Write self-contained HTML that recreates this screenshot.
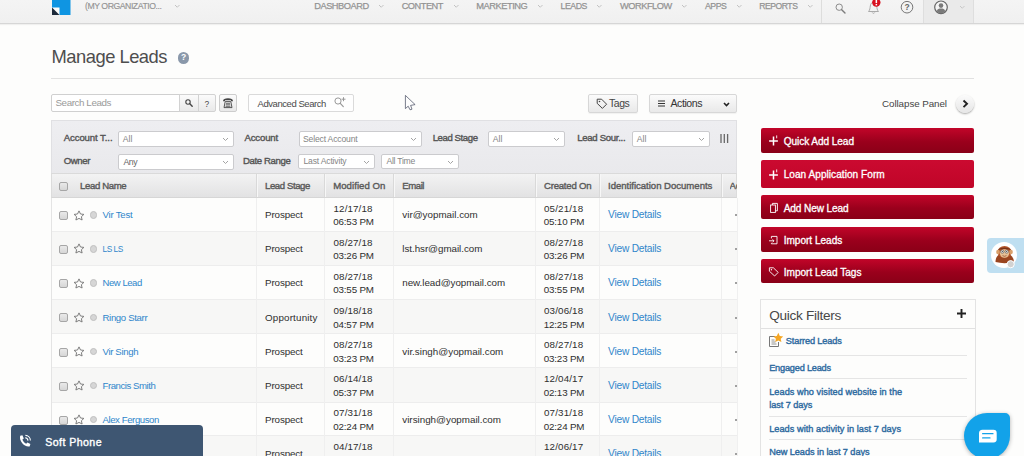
<!DOCTYPE html>
<html>
<head>
<meta charset="utf-8">
<title>Manage Leads</title>
<style>
*{box-sizing:border-box;margin:0;padding:0}
html,body{width:1024px;height:456px;overflow:hidden;background:#fdfdfc;font-family:"Liberation Sans",sans-serif;color:#333}
body{position:relative}
.abs{position:absolute}
.t{white-space:nowrap;position:absolute}
#hdr{left:0;top:0;width:1024px;height:24px;background:linear-gradient(#f4f4f4,#f0f0f0);border-bottom:1px solid #d6d6d6;box-shadow:0 1px 1px rgba(0,0,0,.05)}
.sel{background:#fff;border:1px solid #cbcbce;border-radius:2px;position:absolute}
.row{left:52px;width:685px;position:absolute;border-bottom:1px solid #ededed}
.row.alt{background:#f7f7f6}
.btn{position:absolute;left:761px;width:213px;border-radius:2px;background:linear-gradient(#c20529,#9a001c 55%,#8a0017)}
.qs{position:absolute;left:769px;width:198px;height:1px;background:#e5e5e5}
.cb{position:absolute;width:9px;height:9px;border:1px solid #a6a6a6;border-radius:2px;background:linear-gradient(#e9e9e9,#d6d6d6)}
.vs{position:absolute;width:1px;background:#e6e6e6}
</style>
</head>
<body>

<div id="hdr" class="abs"></div>
<div class="abs" style="left:923px;top:0;width:51px;height:23px;background:#eaeaea;border-left:1px solid #dedede;border-right:1px solid #dedede"></div>
<div class="abs" style="left:821px;top:0;width:1px;height:23px;background:#dddddc"></div>
<svg class="abs" style="left:52px;top:0" width="19" height="16" viewBox="0 0 19 16"><rect x="0" y="0" width="18.5" height="15" fill="#0f95e2"/><rect x="0" y="7.5" width="7.5" height="7.5" fill="#fdfdfc"/><polygon points="0,7.5 7.5,15 0,15" fill="#1d2a3a"/></svg>
<div class="t" style="left:85.00px;top:0px;font-size:8.68px;line-height:12px;letter-spacing:-0.450px;color:#939393;-webkit-text-stroke:0.15px #939393;">(MY ORGANIZATIO...</div>
<svg class="abs" style="left:173.8px;top:4.1px" width="6.5" height="4.25" viewBox="0 0 6.5 4.25"><path d="M1 1 L3.25 3.25 L5.5 1" fill="none" stroke="#c2c2c2" stroke-width="1"/></svg>
<div class="t" style="left:314.20px;top:0px;font-size:9.26px;line-height:12px;letter-spacing:-0.450px;color:#939393;-webkit-text-stroke:0.25px #939393;">DASHBOARD</div>
<svg class="abs" style="left:377.8px;top:4.1px" width="6.5" height="4.25" viewBox="0 0 6.5 4.25"><path d="M1 1 L3.25 3.25 L5.5 1" fill="none" stroke="#c2c2c2" stroke-width="1"/></svg>
<div class="t" style="left:401.70px;top:0px;font-size:9.20px;line-height:12px;letter-spacing:-0.450px;color:#939393;-webkit-text-stroke:0.25px #939393;">CONTENT</div>
<svg class="abs" style="left:452.8px;top:4.1px" width="6.5" height="4.25" viewBox="0 0 6.5 4.25"><path d="M1 1 L3.25 3.25 L5.5 1" fill="none" stroke="#c2c2c2" stroke-width="1"/></svg>
<div class="t" style="left:476.20px;top:0px;font-size:9.31px;line-height:12px;letter-spacing:-0.450px;color:#939393;-webkit-text-stroke:0.25px #939393;">MARKETING</div>
<svg class="abs" style="left:537.2px;top:4.1px" width="6.5" height="4.25" viewBox="0 0 6.5 4.25"><path d="M1 1 L3.25 3.25 L5.5 1" fill="none" stroke="#c2c2c2" stroke-width="1"/></svg>
<div class="t" style="left:560.50px;top:0px;font-size:8.77px;line-height:12px;letter-spacing:-0.450px;color:#939393;-webkit-text-stroke:0.25px #939393;">LEADS</div>
<svg class="abs" style="left:595.8px;top:4.1px" width="6.5" height="4.25" viewBox="0 0 6.5 4.25"><path d="M1 1 L3.25 3.25 L5.5 1" fill="none" stroke="#c2c2c2" stroke-width="1"/></svg>
<div class="t" style="left:620.00px;top:0px;font-size:9.23px;line-height:12px;letter-spacing:-0.450px;color:#939393;-webkit-text-stroke:0.25px #939393;">WORKFLOW</div>
<svg class="abs" style="left:681.2px;top:4.1px" width="6.5" height="4.25" viewBox="0 0 6.5 4.25"><path d="M1 1 L3.25 3.25 L5.5 1" fill="none" stroke="#c2c2c2" stroke-width="1"/></svg>
<div class="t" style="left:705.00px;top:0px;font-size:8.73px;line-height:12px;letter-spacing:-0.450px;color:#939393;-webkit-text-stroke:0.25px #939393;">APPS</div>
<svg class="abs" style="left:735.8px;top:4.1px" width="6.5" height="4.25" viewBox="0 0 6.5 4.25"><path d="M1 1 L3.25 3.25 L5.5 1" fill="none" stroke="#c2c2c2" stroke-width="1"/></svg>
<div class="t" style="left:759.20px;top:0px;font-size:8.61px;line-height:12px;letter-spacing:-0.450px;color:#939393;-webkit-text-stroke:0.25px #939393;">REPORTS</div>
<svg class="abs" style="left:807.2px;top:4.1px" width="6.5" height="4.25" viewBox="0 0 6.5 4.25"><path d="M1 1 L3.25 3.25 L5.5 1" fill="none" stroke="#c2c2c2" stroke-width="1"/></svg>
<svg class="abs" style="left:833px;top:1px" width="16" height="16" viewBox="0 0 16 16"><circle cx="6.2" cy="6.2" r="3.2" fill="none" stroke="#8c8c8c" stroke-width="1"/><path d="M8.7 8.7 L12 12" stroke="#7c7c7c" stroke-width="1.4" stroke-linecap="round"/></svg>
<svg class="abs" style="left:865px;top:0" width="20" height="16" viewBox="0 0 20 16"><path d="M3.5 11.5 C5 10 5 8 5.3 6 C5.6 3.5 7 2.2 8.5 2.2 C10 2.2 11.4 3.5 11.7 6 C12 8 12 10 13.5 11.5 Z" fill="none" stroke="#aaa" stroke-width="1"/><path d="M7.3 12.5 a1.3 1.3 0 0 0 2.4 0" fill="none" stroke="#aaa" stroke-width="1"/><circle cx="11.3" cy="2.5" r="4.2" fill="#d8101f"/><rect x="10.6" y="-0.5" width="1.5" height="3.6" fill="#fff"/><rect x="10.6" y="4" width="1.5" height="1.4" fill="#fff"/></svg>
<svg class="abs" style="left:899px;top:0" width="16" height="16" viewBox="0 0 16 16"><circle cx="8" cy="7.2" r="5.8" fill="none" stroke="#777" stroke-width="1"/><text x="8" y="10.3" font-family="Liberation Sans, sans-serif" font-size="8.5" font-weight="bold" fill="#666" text-anchor="middle">?</text></svg>
<svg class="abs" style="left:932px;top:0" width="18" height="16" viewBox="0 0 18 16"><circle cx="9" cy="7.3" r="6.3" fill="#f4f4f4" stroke="#666" stroke-width="1.2"/><circle cx="9" cy="5.6" r="2.3" fill="#7a7a7a"/><path d="M4.8 11.3 C5.2 8.9 7 8.5 9 8.5 C11 8.5 12.8 8.9 13.2 11.3 C12 12.9 10.5 13.3 9 13.3 C7.5 13.3 6 12.9 4.8 11.3 Z" fill="#7a7a7a"/></svg>
<svg class="abs" style="left:958.8px;top:4.9px" width="6.5" height="4.25" viewBox="0 0 6.5 4.25"><path d="M1 1 L3.25 3.25 L5.5 1" fill="none" stroke="#c8c8c8" stroke-width="1"/></svg>
<div class="t" style="left:51.50px;top:45px;font-size:18.36px;line-height:23px;letter-spacing:-0.500px;color:#4e4e4e;">Manage Leads</div>
<div class="abs" style="left:177.7px;top:52.3px;width:11.6px;height:11.6px;border-radius:50%;background:#8a98aa;color:#fff;font-size:8.5px;font-weight:bold;line-height:11.6px;text-align:center">?</div>
<div class="abs" style="left:51px;top:78px;width:923px;height:1px;background:#e1e1e1"></div>
<div class="abs" style="left:51px;top:94px;width:129px;height:18px;border:1px solid #d0d0d0;border-radius:2px 0 0 2px;background:#fff"></div>
<div class="t" style="left:55.50px;top:96px;font-size:9.80px;line-height:13px;letter-spacing:-0.415px;color:#9a9a9a;">Search Leads</div>
<div class="abs" style="left:179px;top:94px;width:20px;height:18px;border:1px solid #d2d2d2;background:linear-gradient(#fbfbfb,#e9e9e9)"></div>
<svg class="abs" style="left:184px;top:98px" width="10" height="10" viewBox="0 0 10 10"><circle cx="4" cy="4" r="2.2" fill="none" stroke="#444" stroke-width="1.1"/><path d="M5.8 5.8 L8.2 8.2" stroke="#444" stroke-width="1.4" stroke-linecap="round"/></svg>
<div class="abs" style="left:198px;top:94px;width:18px;height:18px;border:1px solid #d2d2d2;border-radius:0 2px 2px 0;background:linear-gradient(#fbfbfb,#e9e9e9)"></div>
<div class="t" style="left:204.60px;top:98px;font-size:8.40px;line-height:12px;letter-spacing:-0.272px;color:#444;">?</div>
<div class="abs" style="left:219px;top:94px;width:18px;height:18px;border:1px solid #cdcdcd;border-radius:2px;background:linear-gradient(#fbfbfb,#e9e9e9)"></div>
<svg class="abs" style="left:222px;top:97px" width="12" height="12" viewBox="0 0 12 12"><path d="M1 4.2 C1 2 3 1.2 6 1.2 C9 1.2 11 2 11 4.2 L9 4.2 L9 3.2 L3 3.2 L3 4.2 Z" fill="#444"/><path d="M3.2 4.6 L8.8 4.6 L10 10.6 L2 10.6 Z" fill="none" stroke="#444" stroke-width="0.9"/><path d="M4 6.3 H8 M3.8 7.8 H8.2 M3.6 9.3 H8.4" stroke="#444" stroke-width="0.8"/></svg>
<div class="abs" style="left:248px;top:94px;width:106px;height:18px;border:1px solid #dadada;border-radius:2px;background:#fefefe"></div>
<div class="t" style="left:257.50px;top:97px;font-size:9.53px;line-height:13px;letter-spacing:-0.450px;color:#4a4a4a;">Advanced Search</div>
<svg class="abs" style="left:333px;top:96px" width="14" height="13" viewBox="0 0 14 13"><circle cx="5" cy="5" r="3.1" fill="none" stroke="#999" stroke-width="1"/><path d="M7.3 7.3 L10.3 10.6" stroke="#999" stroke-width="1.2" stroke-linecap="round"/><path d="M10.5 1.2 V5.2 M8.5 3.2 H12.5" stroke="#999" stroke-width="1"/></svg>
<svg class="abs" style="left:404px;top:94px" width="13" height="18" viewBox="0 0 13 18"><path d="M1.4 1.4 L1.4 14.6 L4.2 12.2 L6 15.8 L8 15.2 L6.6 11.4 L11.1 10.6 Z" fill="#fdfdfd" stroke="#4c5266" stroke-width="0.75" stroke-linejoin="round"/></svg>
<div class="abs" style="left:588px;top:94px;width:50px;height:19px;border:1px solid #d7d7d7;border-radius:2px;background:linear-gradient(#fbfbfb,#e9e9e9);box-shadow:0 1px 1px rgba(0,0,0,.05)"></div>
<svg class="abs" style="left:596px;top:98px" width="12" height="12" viewBox="0 0 12 12"><path d="M1.2 1.2 H5.6 L10.6 6.2 L6.4 10.4 L1.2 5.4 Z" fill="none" stroke="#444" stroke-width="1" stroke-linejoin="round"/><circle cx="3.5" cy="3.5" r="0.8" fill="#444"/></svg>
<div class="t" style="left:609.00px;top:97px;font-size:10.46px;line-height:13px;letter-spacing:-0.450px;color:#444;">Tags</div>
<div class="abs" style="left:649px;top:94px;width:88px;height:19px;border:1px solid #d7d7d7;border-radius:2px;background:linear-gradient(#fbfbfb,#e9e9e9);box-shadow:0 1px 1px rgba(0,0,0,.05)"></div>
<svg class="abs" style="left:658px;top:100px" width="8" height="8" viewBox="0 0 8 8"><path d="M0 1 H7 M0 3.5 H7 M0 6 H7" stroke="#333" stroke-width="1.2"/></svg>
<div class="t" style="left:670.50px;top:96px;font-size:10.57px;line-height:14px;letter-spacing:-0.450px;color:#333;">Actions</div>
<svg class="abs" style="left:722.5px;top:102.2px" width="7" height="4.5" viewBox="0 0 7 4.5"><path d="M1 1 L3.5 3.5 L6 1" fill="none" stroke="#222" stroke-width="1.6"/></svg>
<div class="t" style="left:882.00px;top:97px;font-size:9.80px;line-height:13px;letter-spacing:-0.066px;color:#444;">Collapse Panel</div>
<div class="abs" style="left:955.5px;top:94.5px;width:18px;height:18px;border-radius:50%;background:linear-gradient(#fbfbfb,#e6e6e6);box-shadow:0 1px 2px rgba(0,0,0,.35)"></div>
<svg class="abs" style="left:961px;top:99px" width="9" height="10" viewBox="0 0 9 10"><path d="M2.5 1.5 L6 4.8 L2.5 8.1" fill="none" stroke="#222" stroke-width="1.9"/></svg>
<div class="abs" style="left:51px;top:120px;width:686px;height:53px;background:linear-gradient(#eeeef1,#e9e9ec);border:1px solid #e0e0e3;border-bottom:none"></div>
<div class="t" style="left:63.70px;top:131px;font-size:9.60px;line-height:13px;letter-spacing:-0.099px;color:#555;-webkit-text-stroke:0.38px #555;">Account T...</div>
<div class="sel" style="left:118px;top:131px;width:116px;height:16px"></div><div class="t" style="left:122.80px;top:133px;font-size:8.60px;line-height:12px;letter-spacing:0.014px;color:#858585;">All</div><svg class="abs" style="left:221.5px;top:137.2px" width="7" height="4.5" viewBox="0 0 7 4.5"><path d="M1 1 L3.5 3.5 L6 1" fill="none" stroke="#a4a4a4" stroke-width="1"/></svg>
<div class="t" style="left:244.50px;top:131px;font-size:9.60px;line-height:13px;letter-spacing:-0.170px;color:#555;-webkit-text-stroke:0.38px #555;">Account</div>
<div class="sel" style="left:299px;top:131px;width:123px;height:16px"></div><div class="t" style="left:303.00px;top:133px;font-size:8.60px;line-height:12px;letter-spacing:-0.171px;color:#858585;">Select Account</div><svg class="abs" style="left:409.5px;top:137.2px" width="7" height="4.5" viewBox="0 0 7 4.5"><path d="M1 1 L3.5 3.5 L6 1" fill="none" stroke="#a4a4a4" stroke-width="1"/></svg>
<div class="t" style="left:432.70px;top:131px;font-size:9.60px;line-height:13px;letter-spacing:-0.421px;color:#555;-webkit-text-stroke:0.38px #555;">Lead Stage</div>
<div class="sel" style="left:488px;top:131px;width:77px;height:16px"></div><div class="t" style="left:492.80px;top:133px;font-size:8.60px;line-height:12px;letter-spacing:0.014px;color:#858585;">All</div><svg class="abs" style="left:552.5px;top:137.2px" width="7" height="4.5" viewBox="0 0 7 4.5"><path d="M1 1 L3.5 3.5 L6 1" fill="none" stroke="#a4a4a4" stroke-width="1"/></svg>
<div class="t" style="left:577.30px;top:131px;font-size:9.60px;line-height:13px;letter-spacing:-0.314px;color:#555;-webkit-text-stroke:0.38px #555;">Lead Sour...</div>
<div class="sel" style="left:632px;top:131px;width:78px;height:16px"></div><div class="t" style="left:636.80px;top:133px;font-size:8.60px;line-height:12px;letter-spacing:0.014px;color:#858585;">All</div><svg class="abs" style="left:697.5px;top:137.2px" width="7" height="4.5" viewBox="0 0 7 4.5"><path d="M1 1 L3.5 3.5 L6 1" fill="none" stroke="#a4a4a4" stroke-width="1"/></svg>
<svg class="abs" style="left:720px;top:134px" width="9" height="10" viewBox="0 0 9 10"><path d="M1 0 V9 M4.3 0 V9 M7.6 0 V9" stroke="#686868" stroke-width="1.3"/></svg>
<div class="t" style="left:63.70px;top:154px;font-size:9.60px;line-height:13px;letter-spacing:-0.395px;color:#555;-webkit-text-stroke:0.38px #555;">Owner</div>
<div class="sel" style="left:118px;top:154px;width:116px;height:16px"></div><div class="t" style="left:123.50px;top:156px;font-size:8.73px;line-height:12px;letter-spacing:-0.450px;color:#666;">Any</div><svg class="abs" style="left:221.5px;top:160.2px" width="7" height="4.5" viewBox="0 0 7 4.5"><path d="M1 1 L3.5 3.5 L6 1" fill="none" stroke="#a4a4a4" stroke-width="1"/></svg>
<div class="t" style="left:243.00px;top:154px;font-size:9.60px;line-height:13px;letter-spacing:-0.373px;color:#555;-webkit-text-stroke:0.38px #555;">Date Range</div>
<div class="sel" style="left:298px;top:153.5px;width:77px;height:15.5px"></div><div class="t" style="left:303.50px;top:155px;font-size:8.60px;line-height:12px;letter-spacing:-0.185px;color:#858585;">Last Activity</div><svg class="abs" style="left:362.5px;top:159.5px" width="7" height="4.5" viewBox="0 0 7 4.5"><path d="M1 1 L3.5 3.5 L6 1" fill="none" stroke="#a4a4a4" stroke-width="1"/></svg>
<div class="sel" style="left:381px;top:153.5px;width:78px;height:15.5px"></div><div class="t" style="left:386.50px;top:155px;font-size:8.60px;line-height:12px;letter-spacing:-0.260px;color:#858585;">All Time</div><svg class="abs" style="left:446.5px;top:159.5px" width="7" height="4.5" viewBox="0 0 7 4.5"><path d="M1 1 L3.5 3.5 L6 1" fill="none" stroke="#a4a4a4" stroke-width="1"/></svg>
<div class="abs" style="left:51px;top:173px;width:686px;height:25px;background:linear-gradient(#f3f3f3,#e2e2e3);border:1px solid #dcdcdc;border-top:1px solid #dadada;border-bottom:1px solid #d6d6d6"></div>
<div class="vs" style="left:255.5px;top:174px;height:23px;background:#d9d9d9"></div>
<div class="vs" style="left:256.5px;top:174px;height:23px;background:#f7f7f7"></div>
<div class="vs" style="left:255.5px;top:198px;height:260px;background:#ececec"></div>
<div class="vs" style="left:323.5px;top:174px;height:23px;background:#d9d9d9"></div>
<div class="vs" style="left:324.5px;top:174px;height:23px;background:#f7f7f7"></div>
<div class="vs" style="left:323.5px;top:198px;height:260px;background:#ececec"></div>
<div class="vs" style="left:393.3px;top:174px;height:23px;background:#d9d9d9"></div>
<div class="vs" style="left:394.3px;top:174px;height:23px;background:#f7f7f7"></div>
<div class="vs" style="left:393.3px;top:198px;height:260px;background:#ececec"></div>
<div class="vs" style="left:535px;top:174px;height:23px;background:#d9d9d9"></div>
<div class="vs" style="left:536px;top:174px;height:23px;background:#f7f7f7"></div>
<div class="vs" style="left:535px;top:198px;height:260px;background:#ececec"></div>
<div class="vs" style="left:599px;top:174px;height:23px;background:#d9d9d9"></div>
<div class="vs" style="left:600px;top:174px;height:23px;background:#f7f7f7"></div>
<div class="vs" style="left:599px;top:198px;height:260px;background:#ececec"></div>
<div class="vs" style="left:720.5px;top:174px;height:23px;background:#d9d9d9"></div>
<div class="vs" style="left:721.5px;top:174px;height:23px;background:#f7f7f7"></div>
<div class="vs" style="left:720.5px;top:198px;height:260px;background:#ececec"></div>
<div class="cb" style="left:59px;top:182px"></div>
<div class="t" style="left:80.00px;top:179px;font-size:9.60px;line-height:13px;letter-spacing:-0.370px;color:#5a5a5a;-webkit-text-stroke:0.38px #5a5a5a;">Lead Name</div>
<div class="t" style="left:265.00px;top:179px;font-size:9.60px;line-height:13px;letter-spacing:-0.411px;color:#5a5a5a;-webkit-text-stroke:0.38px #5a5a5a;">Lead Stage</div>
<div class="t" style="left:333.20px;top:179px;font-size:9.60px;line-height:13px;letter-spacing:0.049px;color:#5a5a5a;-webkit-text-stroke:0.38px #5a5a5a;">Modified On</div>
<div class="t" style="left:402.30px;top:179px;font-size:9.58px;line-height:13px;letter-spacing:-0.450px;color:#5a5a5a;-webkit-text-stroke:0.38px #5a5a5a;">Email</div>
<div class="t" style="left:544.00px;top:179px;font-size:9.60px;line-height:13px;letter-spacing:-0.233px;color:#5a5a5a;-webkit-text-stroke:0.38px #5a5a5a;">Created On</div>
<div class="t" style="left:608.00px;top:179px;font-size:9.60px;line-height:13px;letter-spacing:-0.030px;color:#5a5a5a;-webkit-text-stroke:0.38px #5a5a5a;">Identification Documents</div>
<div class="abs" style="left:729.5px;top:178px;width:7px;height:16px;overflow:hidden"><div class="t" style="left:0.00px;top:1px;font-size:9.60px;line-height:13px;letter-spacing:-0.102px;color:#5a5a5a;-webkit-text-stroke:0.38px #5a5a5a;">Ac</div></div>
<div class="row" style="top:198px;height:33.599999999999994px"></div>
<div class="cb" style="left:59px;top:211.0px"></div>
<svg class="abs" style="left:73px;top:209.5px" width="12" height="11" viewBox="0 0 12 11"><path d="M6 0.9 L7.5 4 L10.9 4.4 L8.4 6.7 L9.1 10 L6 8.4 L2.9 10 L3.6 6.7 L1.1 4.4 L4.5 4 Z" fill="none" stroke="#777" stroke-width="0.95" stroke-linejoin="round"/></svg>
<div class="abs" style="left:89.6px;top:211.2px;width:7.6px;height:7.6px;border-radius:50%;background:#d6d6d6;border:1px solid #c0c0c0"></div>
<div class="t" style="left:102.50px;top:208px;font-size:9.60px;line-height:13px;letter-spacing:-0.207px;color:#2f86cb;">Vir Test</div>
<div class="t" style="left:265.00px;top:208px;font-size:9.80px;line-height:13px;letter-spacing:-0.122px;color:#2e2e2e;">Prospect</div>
<div class="t" style="left:333.50px;top:202px;font-size:9.80px;line-height:13px;letter-spacing:0.119px;color:#2e2e2e;">12/17/18</div>
<div class="t" style="left:333.30px;top:215px;font-size:9.80px;line-height:13px;letter-spacing:-0.181px;color:#2e2e2e;">06:53 PM</div>
<div class="t" style="left:402.30px;top:208px;font-size:9.80px;line-height:13px;letter-spacing:0.007px;color:#2e2e2e;">vir@yopmail.com</div>
<div class="t" style="left:544.00px;top:202px;font-size:9.80px;line-height:13px;letter-spacing:0.144px;color:#2e2e2e;">05/21/18</div>
<div class="t" style="left:543.80px;top:215px;font-size:9.80px;line-height:13px;letter-spacing:-0.181px;color:#2e2e2e;">05:10 PM</div>
<div class="t" style="left:608.00px;top:208px;font-size:10.20px;line-height:13px;letter-spacing:-0.220px;color:#2f86cb;">View Details</div>
<div class="abs" style="left:735px;top:214.3px;width:2px;height:2px;background:#a0a0a0"></div>
<div class="row alt" style="top:231.6px;height:34.20000000000002px"></div>
<div class="cb" style="left:59px;top:244.9px"></div>
<svg class="abs" style="left:73px;top:243.4px" width="12" height="11" viewBox="0 0 12 11"><path d="M6 0.9 L7.5 4 L10.9 4.4 L8.4 6.7 L9.1 10 L6 8.4 L2.9 10 L3.6 6.7 L1.1 4.4 L4.5 4 Z" fill="none" stroke="#777" stroke-width="0.95" stroke-linejoin="round"/></svg>
<div class="abs" style="left:89.6px;top:245.1px;width:7.6px;height:7.6px;border-radius:50%;background:#d6d6d6;border:1px solid #c0c0c0"></div>
<div class="t" style="left:102.50px;top:244px;font-size:8.28px;line-height:11px;letter-spacing:-0.450px;color:#2f86cb;">LS LS</div>
<div class="t" style="left:265.00px;top:242px;font-size:9.80px;line-height:13px;letter-spacing:-0.122px;color:#2e2e2e;">Prospect</div>
<div class="t" style="left:333.50px;top:236px;font-size:9.80px;line-height:13px;letter-spacing:0.119px;color:#2e2e2e;">08/27/18</div>
<div class="t" style="left:333.30px;top:249px;font-size:9.80px;line-height:13px;letter-spacing:-0.181px;color:#2e2e2e;">03:26 PM</div>
<div class="t" style="left:402.30px;top:242px;font-size:9.80px;line-height:13px;letter-spacing:-0.044px;color:#2e2e2e;">lst.hsr@gmail.com</div>
<div class="t" style="left:544.00px;top:236px;font-size:9.80px;line-height:13px;letter-spacing:0.144px;color:#2e2e2e;">08/27/18</div>
<div class="t" style="left:543.80px;top:249px;font-size:9.80px;line-height:13px;letter-spacing:-0.181px;color:#2e2e2e;">03:26 PM</div>
<div class="t" style="left:608.00px;top:242px;font-size:10.20px;line-height:13px;letter-spacing:-0.220px;color:#2f86cb;">View Details</div>
<div class="abs" style="left:735px;top:248.2px;width:2px;height:2px;background:#a0a0a0"></div>
<div class="row" style="top:265.8px;height:34.0px"></div>
<div class="cb" style="left:59px;top:279.0px"></div>
<svg class="abs" style="left:73px;top:277.5px" width="12" height="11" viewBox="0 0 12 11"><path d="M6 0.9 L7.5 4 L10.9 4.4 L8.4 6.7 L9.1 10 L6 8.4 L2.9 10 L3.6 6.7 L1.1 4.4 L4.5 4 Z" fill="none" stroke="#777" stroke-width="0.95" stroke-linejoin="round"/></svg>
<div class="abs" style="left:89.6px;top:279.2px;width:7.6px;height:7.6px;border-radius:50%;background:#d6d6d6;border:1px solid #c0c0c0"></div>
<div class="t" style="left:102.50px;top:276px;font-size:9.53px;line-height:13px;letter-spacing:-0.450px;color:#2f86cb;">New Lead</div>
<div class="t" style="left:265.00px;top:276px;font-size:9.80px;line-height:13px;letter-spacing:-0.122px;color:#2e2e2e;">Prospect</div>
<div class="t" style="left:333.50px;top:270px;font-size:9.80px;line-height:13px;letter-spacing:0.119px;color:#2e2e2e;">08/27/18</div>
<div class="t" style="left:333.30px;top:283px;font-size:9.80px;line-height:13px;letter-spacing:-0.181px;color:#2e2e2e;">03:55 PM</div>
<div class="t" style="left:402.30px;top:276px;font-size:9.80px;line-height:13px;letter-spacing:-0.042px;color:#2e2e2e;">new.lead@yopmail.com</div>
<div class="t" style="left:544.00px;top:270px;font-size:9.80px;line-height:13px;letter-spacing:0.144px;color:#2e2e2e;">08/27/18</div>
<div class="t" style="left:543.80px;top:283px;font-size:9.80px;line-height:13px;letter-spacing:-0.181px;color:#2e2e2e;">03:55 PM</div>
<div class="t" style="left:608.00px;top:276px;font-size:10.20px;line-height:13px;letter-spacing:-0.220px;color:#2f86cb;">View Details</div>
<div class="abs" style="left:735px;top:282.3px;width:2px;height:2px;background:#a0a0a0"></div>
<div class="row alt" style="top:299.8px;height:34.599999999999966px"></div>
<div class="cb" style="left:59px;top:313.3px"></div>
<svg class="abs" style="left:73px;top:311.8px" width="12" height="11" viewBox="0 0 12 11"><path d="M6 0.9 L7.5 4 L10.9 4.4 L8.4 6.7 L9.1 10 L6 8.4 L2.9 10 L3.6 6.7 L1.1 4.4 L4.5 4 Z" fill="none" stroke="#777" stroke-width="0.95" stroke-linejoin="round"/></svg>
<div class="abs" style="left:89.6px;top:313.5px;width:7.6px;height:7.6px;border-radius:50%;background:#d6d6d6;border:1px solid #c0c0c0"></div>
<div class="t" style="left:102.50px;top:311px;font-size:9.60px;line-height:13px;letter-spacing:-0.341px;color:#2f86cb;">Ringo Starr</div>
<div class="t" style="left:265.00px;top:311px;font-size:9.80px;line-height:13px;letter-spacing:0.176px;color:#2e2e2e;">Opportunity</div>
<div class="t" style="left:333.50px;top:304px;font-size:9.80px;line-height:13px;letter-spacing:0.119px;color:#2e2e2e;">09/18/18</div>
<div class="t" style="left:333.30px;top:318px;font-size:9.80px;line-height:13px;letter-spacing:-0.181px;color:#2e2e2e;">04:57 PM</div>
<div class="t" style="left:544.00px;top:304px;font-size:9.80px;line-height:13px;letter-spacing:0.144px;color:#2e2e2e;">03/06/18</div>
<div class="t" style="left:543.80px;top:318px;font-size:9.80px;line-height:13px;letter-spacing:-0.181px;color:#2e2e2e;">12:25 PM</div>
<div class="t" style="left:608.00px;top:311px;font-size:10.20px;line-height:13px;letter-spacing:-0.220px;color:#2f86cb;">View Details</div>
<div class="abs" style="left:735px;top:316.6px;width:2px;height:2px;background:#a0a0a0"></div>
<div class="row" style="top:334.4px;height:34.0px"></div>
<div class="cb" style="left:59px;top:347.6px"></div>
<svg class="abs" style="left:73px;top:346.1px" width="12" height="11" viewBox="0 0 12 11"><path d="M6 0.9 L7.5 4 L10.9 4.4 L8.4 6.7 L9.1 10 L6 8.4 L2.9 10 L3.6 6.7 L1.1 4.4 L4.5 4 Z" fill="none" stroke="#777" stroke-width="0.95" stroke-linejoin="round"/></svg>
<div class="abs" style="left:89.6px;top:347.8px;width:7.6px;height:7.6px;border-radius:50%;background:#d6d6d6;border:1px solid #c0c0c0"></div>
<div class="t" style="left:102.50px;top:345px;font-size:9.60px;line-height:13px;letter-spacing:-0.342px;color:#2f86cb;">Vir Singh</div>
<div class="t" style="left:265.00px;top:345px;font-size:9.80px;line-height:13px;letter-spacing:-0.122px;color:#2e2e2e;">Prospect</div>
<div class="t" style="left:333.50px;top:338px;font-size:9.80px;line-height:13px;letter-spacing:0.119px;color:#2e2e2e;">08/27/18</div>
<div class="t" style="left:333.30px;top:352px;font-size:9.80px;line-height:13px;letter-spacing:-0.181px;color:#2e2e2e;">03:23 PM</div>
<div class="t" style="left:402.30px;top:345px;font-size:9.80px;line-height:13px;letter-spacing:0.005px;color:#2e2e2e;">vir.singh@yopmail.com</div>
<div class="t" style="left:544.00px;top:338px;font-size:9.80px;line-height:13px;letter-spacing:0.144px;color:#2e2e2e;">08/27/18</div>
<div class="t" style="left:543.80px;top:352px;font-size:9.80px;line-height:13px;letter-spacing:-0.181px;color:#2e2e2e;">03:23 PM</div>
<div class="t" style="left:608.00px;top:345px;font-size:10.20px;line-height:13px;letter-spacing:-0.220px;color:#2f86cb;">View Details</div>
<div class="abs" style="left:735px;top:350.9px;width:2px;height:2px;background:#a0a0a0"></div>
<div class="row alt" style="top:368.4px;height:34.200000000000045px"></div>
<div class="cb" style="left:59px;top:381.7px"></div>
<svg class="abs" style="left:73px;top:380.2px" width="12" height="11" viewBox="0 0 12 11"><path d="M6 0.9 L7.5 4 L10.9 4.4 L8.4 6.7 L9.1 10 L6 8.4 L2.9 10 L3.6 6.7 L1.1 4.4 L4.5 4 Z" fill="none" stroke="#777" stroke-width="0.95" stroke-linejoin="round"/></svg>
<div class="abs" style="left:89.6px;top:381.9px;width:7.6px;height:7.6px;border-radius:50%;background:#d6d6d6;border:1px solid #c0c0c0"></div>
<div class="t" style="left:102.50px;top:379px;font-size:9.60px;line-height:13px;letter-spacing:-0.444px;color:#2f86cb;">Francis Smith</div>
<div class="t" style="left:265.00px;top:379px;font-size:9.80px;line-height:13px;letter-spacing:-0.122px;color:#2e2e2e;">Prospect</div>
<div class="t" style="left:333.50px;top:372px;font-size:9.80px;line-height:13px;letter-spacing:0.119px;color:#2e2e2e;">06/14/18</div>
<div class="t" style="left:333.30px;top:386px;font-size:9.80px;line-height:13px;letter-spacing:-0.181px;color:#2e2e2e;">05:37 PM</div>
<div class="t" style="left:544.00px;top:372px;font-size:9.80px;line-height:13px;letter-spacing:0.144px;color:#2e2e2e;">12/04/17</div>
<div class="t" style="left:543.80px;top:386px;font-size:9.80px;line-height:13px;letter-spacing:-0.181px;color:#2e2e2e;">02:13 PM</div>
<div class="t" style="left:608.00px;top:379px;font-size:10.20px;line-height:13px;letter-spacing:-0.220px;color:#2f86cb;">View Details</div>
<div class="abs" style="left:735px;top:385.0px;width:2px;height:2px;background:#a0a0a0"></div>
<div class="row" style="top:402.6px;height:33.599999999999966px"></div>
<div class="cb" style="left:59px;top:415.6px"></div>
<svg class="abs" style="left:73px;top:414.1px" width="12" height="11" viewBox="0 0 12 11"><path d="M6 0.9 L7.5 4 L10.9 4.4 L8.4 6.7 L9.1 10 L6 8.4 L2.9 10 L3.6 6.7 L1.1 4.4 L4.5 4 Z" fill="none" stroke="#777" stroke-width="0.95" stroke-linejoin="round"/></svg>
<div class="abs" style="left:89.6px;top:415.8px;width:7.6px;height:7.6px;border-radius:50%;background:#d6d6d6;border:1px solid #c0c0c0"></div>
<div class="t" style="left:102.50px;top:413px;font-size:9.60px;line-height:13px;letter-spacing:-0.415px;color:#2f86cb;">Alex Ferguson</div>
<div class="t" style="left:265.00px;top:413px;font-size:9.80px;line-height:13px;letter-spacing:-0.122px;color:#2e2e2e;">Prospect</div>
<div class="t" style="left:333.50px;top:406px;font-size:9.80px;line-height:13px;letter-spacing:0.119px;color:#2e2e2e;">07/31/18</div>
<div class="t" style="left:333.30px;top:420px;font-size:9.80px;line-height:13px;letter-spacing:-0.181px;color:#2e2e2e;">02:24 PM</div>
<div class="t" style="left:402.30px;top:413px;font-size:9.80px;line-height:13px;letter-spacing:-0.001px;color:#2e2e2e;">virsingh@yopmail.com</div>
<div class="t" style="left:544.00px;top:406px;font-size:9.80px;line-height:13px;letter-spacing:0.144px;color:#2e2e2e;">07/31/18</div>
<div class="t" style="left:543.80px;top:420px;font-size:9.80px;line-height:13px;letter-spacing:-0.181px;color:#2e2e2e;">02:24 PM</div>
<div class="t" style="left:608.00px;top:413px;font-size:10.20px;line-height:13px;letter-spacing:-0.220px;color:#2f86cb;">View Details</div>
<div class="abs" style="left:735px;top:418.9px;width:2px;height:2px;background:#a0a0a0"></div>
<div class="row alt" style="top:436.2px;height:34.10000000000002px"></div>
<div class="cb" style="left:59px;top:449.4px"></div>
<svg class="abs" style="left:73px;top:447.9px" width="12" height="11" viewBox="0 0 12 11"><path d="M6 0.9 L7.5 4 L10.9 4.4 L8.4 6.7 L9.1 10 L6 8.4 L2.9 10 L3.6 6.7 L1.1 4.4 L4.5 4 Z" fill="none" stroke="#777" stroke-width="0.95" stroke-linejoin="round"/></svg>
<div class="abs" style="left:89.6px;top:449.6px;width:7.6px;height:7.6px;border-radius:50%;background:#d6d6d6;border:1px solid #c0c0c0"></div>
<div class="t" style="left:265.00px;top:447px;font-size:9.80px;line-height:13px;letter-spacing:-0.122px;color:#2e2e2e;">Prospect</div>
<div class="t" style="left:333.50px;top:440px;font-size:9.80px;line-height:13px;letter-spacing:0.119px;color:#2e2e2e;">04/17/18</div>
<div class="t" style="left:544.00px;top:440px;font-size:9.80px;line-height:13px;letter-spacing:0.144px;color:#2e2e2e;">12/06/17</div>
<div class="t" style="left:608.00px;top:447px;font-size:10.20px;line-height:13px;letter-spacing:-0.220px;color:#2f86cb;">View Details</div>
<div class="abs" style="left:735px;top:452.8px;width:2px;height:2px;background:#a0a0a0"></div>
<div class="vs" style="left:255.5px;top:198px;height:260px;background:#efefef"></div>
<div class="vs" style="left:323.5px;top:198px;height:260px;background:#efefef"></div>
<div class="vs" style="left:393.3px;top:198px;height:260px;background:#efefef"></div>
<div class="vs" style="left:535px;top:198px;height:260px;background:#efefef"></div>
<div class="vs" style="left:599px;top:198px;height:260px;background:#efefef"></div>
<div class="vs" style="left:720.5px;top:198px;height:260px;background:#efefef"></div>
<div class="vs" style="left:51px;top:198px;height:260px;background:#e4e4e4"></div>
<div class="vs" style="left:736.5px;top:198px;height:260px;background:#f0f0f0"></div>
<div class="btn" style="top:128px;height:24.599999999999994px"></div><div class="t" style="left:783.70px;top:135px;font-size:10.10px;line-height:13px;letter-spacing:-0.072px;color:#fff;-webkit-text-stroke:0.3px #fff;">Quick Add Lead</div><svg class="abs" style="left:768px;top:135.3px" width="12" height="12" viewBox="0 0 12 12"><path d="M5.5 1.6 V10.6 M1.1 6 H9.9" stroke="#fff" stroke-width="1.5"/><path d="M8.7 0.4 V3.3" stroke="#fff" stroke-width="0.9"/></svg>
<div class="btn" style="top:160px;height:27.599999999999994px;background:linear-gradient(#cb0a30,#c00528)"></div><div class="t" style="left:783.70px;top:168px;font-size:10.10px;line-height:13px;letter-spacing:0.029px;color:#fff;-webkit-text-stroke:0.3px #fff;">Loan Application Form</div><svg class="abs" style="left:768px;top:168.8px" width="12" height="12" viewBox="0 0 12 12"><path d="M5.5 1.6 V10.6 M1.1 6 H9.9" stroke="#fff" stroke-width="1.5"/><path d="M8.7 0.4 V3.3" stroke="#fff" stroke-width="0.9"/></svg>
<div class="btn" style="top:195.3px;height:24.099999999999994px"></div><div class="t" style="left:783.70px;top:202px;font-size:10.10px;line-height:13px;letter-spacing:-0.113px;color:#fff;-webkit-text-stroke:0.3px #fff;">Add New Lead</div><svg class="abs" style="left:768px;top:202.4px" width="12" height="12" viewBox="0 0 12 12"><rect x="2.6" y="3" width="4.8" height="7.4" fill="none" stroke="#fff" stroke-width="0.9"/><path d="M4.4 3 V1.4 H9.4 V8.8 H7.4" fill="none" stroke="#fff" stroke-width="0.9"/></svg>
<div class="btn" style="top:227px;height:24.69999999999999px"></div><div class="t" style="left:783.70px;top:234px;font-size:10.10px;line-height:13px;letter-spacing:-0.029px;color:#fff;-webkit-text-stroke:0.3px #fff;">Import Leads</div><svg class="abs" style="left:768px;top:234.3px" width="12" height="12" viewBox="0 0 12 12"><path d="M3.4 4.4 V2.4 H9 V9.8 H3.4 V8.8" fill="none" stroke="#fff" stroke-width="0.9"/><path d="M1 6.8 H6 M4.6 5.4 L6 6.8 L4.6 8.2" fill="none" stroke="#fff" stroke-width="0.9"/></svg>
<div class="btn" style="top:259px;height:24.399999999999977px"></div><div class="t" style="left:783.70px;top:266px;font-size:10.10px;line-height:13px;letter-spacing:-0.004px;color:#fff;-webkit-text-stroke:0.3px #fff;">Import Lead Tags</div><svg class="abs" style="left:768px;top:266.2px" width="12" height="12" viewBox="0 0 12 12"><path d="M1.4 1.8 H5.4 L10.2 6.4 L6.6 10 L1.4 5.2 Z" fill="none" stroke="#fff" stroke-width="0.9" stroke-linejoin="round"/><circle cx="3.4" cy="3.8" r="0.7" fill="#fff"/></svg>
<div class="abs" style="left:760px;top:298.5px;width:216px;height:170px;border:1px solid #e3e3e3;background:#fdfdfc"></div>
<div class="t" style="left:769.20px;top:307px;font-size:13.60px;line-height:17px;letter-spacing:-0.290px;color:#484848;">Quick Filters</div>
<svg class="abs" style="left:956px;top:308px" width="11" height="11" viewBox="0 0 11 11"><path d="M5.5 1 V10 M1 5.5 H10" stroke="#222" stroke-width="1.9"/></svg>
<div class="abs" style="left:761px;top:328px;width:214px;height:1px;background:#e1e1e1"></div>
<svg class="abs" style="left:768px;top:332px" width="16" height="16" viewBox="0 0 16 16"><path d="M1.5 4.5 H7 M1.5 4.5 V14.5 H10.5 V10" fill="none" stroke="#777" stroke-width="1"/><path d="M3.5 8 H6.5 M3.5 10 H7.5 M3.5 12 H8.5" stroke="#888" stroke-width="0.9"/><path d="M10.3 0.8 L11.8 4 L15.2 4.4 L12.7 6.7 L13.4 10 L10.3 8.4 L7.2 10 L7.9 6.7 L5.4 4.4 L8.8 4 Z" fill="#f5a623"/></svg>
<div class="t" style="left:785.80px;top:335px;font-size:9.20px;line-height:12px;letter-spacing:-0.138px;color:#2d6a9f;-webkit-text-stroke:0.38px #2d6a9f;">Starred Leads</div>
<div class="qs" style="top:355px"></div>
<div class="t" style="left:769.20px;top:362px;font-size:9.20px;line-height:12px;letter-spacing:-0.205px;color:#2d6a9f;-webkit-text-stroke:0.38px #2d6a9f;">Engaged Leads</div>
<div class="qs" style="top:378px"></div>
<div class="t" style="left:769.20px;top:386px;font-size:9.20px;line-height:12px;letter-spacing:0.039px;color:#2d6a9f;-webkit-text-stroke:0.38px #2d6a9f;">Leads who visited website in the</div>
<div class="t" style="left:769.20px;top:399px;font-size:9.20px;line-height:12px;letter-spacing:-0.071px;color:#2d6a9f;-webkit-text-stroke:0.38px #2d6a9f;">last 7 days</div>
<div class="qs" style="top:416px"></div>
<div class="t" style="left:769.20px;top:423px;font-size:9.20px;line-height:12px;letter-spacing:0.032px;color:#2d6a9f;-webkit-text-stroke:0.38px #2d6a9f;">Leads with activity in last 7 days</div>
<div class="qs" style="top:439px"></div>
<div class="t" style="left:769.20px;top:446px;font-size:9.20px;line-height:12px;letter-spacing:-0.078px;color:#2d6a9f;-webkit-text-stroke:0.38px #2d6a9f;">New Leads in last 7 days</div>
<div class="abs" style="left:11px;top:425px;width:192px;height:40px;background:#3e5672;border-radius:4px 4px 0 0"></div>
<svg class="abs" style="left:18px;top:434px" width="14" height="15" viewBox="0 0 14 15"><path d="M2.2 1.8 L4.4 1.2 L5.8 4.4 L4.4 5.6 C5 7.4 6.4 9 8.2 9.8 L9.4 8.4 L12.4 10 L11.6 12.4 C6.6 13.4 0.8 7.2 2.2 1.8 Z" fill="#fff"/><path d="M7.2 3.8 A3 3 0 0 1 10 6.6 M7.4 1.4 A5.2 5.2 0 0 1 12.4 6.4" fill="none" stroke="#fff" stroke-width="1.1"/></svg>
<div class="t" style="left:45.20px;top:435px;font-size:10.60px;line-height:14px;letter-spacing:0.435px;color:#fff;-webkit-text-stroke:0.38px #fff;">Soft Phone</div>
<div class="abs" style="left:986.7px;top:238px;width:40px;height:34.6px;background:#bfdff1;border-radius:4px 0 0 4px"></div>
<div class="abs" style="left:990.5px;top:241.8px;width:26px;height:26px;border-radius:50%;background:#fff"></div>
<svg class="abs" style="left:990px;top:241px" width="30" height="28" viewBox="0 0 30 28"><path d="M5.5 21 C5.5 15 9 12.5 14.5 12.5 C20 12.5 23.5 15 24 21 C18 22.5 11 22.5 5.5 21 Z" fill="#9a4520"/><ellipse cx="14.5" cy="11" rx="7" ry="6" fill="#b4562a"/><path d="M8 9 C9 5.5 20 5.5 21 9 C18 7.5 11 7.5 8 9 Z" fill="#7a3318"/><ellipse cx="8" cy="11" rx="1.8" ry="2.2" fill="#d9a06b"/><ellipse cx="21" cy="11" rx="1.8" ry="2.2" fill="#d9a06b"/><ellipse cx="14.5" cy="12.5" rx="4.6" ry="4.2" fill="#e6c096"/><circle cx="12.3" cy="10.6" r="1.6" fill="#fff" stroke="#444" stroke-width="0.6"/><circle cx="16.7" cy="10.6" r="1.6" fill="#fff" stroke="#444" stroke-width="0.6"/><circle cx="12.3" cy="10.6" r="0.6" fill="#222"/><circle cx="16.7" cy="10.6" r="0.6" fill="#222"/><path d="M12.5 14.6 Q14.5 16 16.5 14.6" fill="none" stroke="#8a3f22" stroke-width="0.7"/><circle cx="20.7" cy="23.2" r="3.6" fill="#d2d2d2" stroke="#fff" stroke-width="1"/></svg>
<div class="abs" style="left:964px;top:412.6px;width:46px;height:46px;border-radius:23px 5px 23px 23px;background:#12a2e9;box-shadow:0 1px 4px rgba(0,0,0,.3)"></div>
<svg class="abs" style="left:978px;top:428.5px" width="20" height="15" viewBox="0 0 20 15"><path d="M4.5 0.8 H15.5 A3.2 3.2 0 0 1 18.7 4 V10 A3.2 3.2 0 0 1 15.5 13.4 H1 V4.3 A3.5 3.5 0 0 1 4.5 0.8 Z" fill="#fff"/><path d="M4.6 4.7 H15 M4.6 8.9 H12" stroke="#12a2e9" stroke-width="1.2" stroke-linecap="round"/></svg>
</body>
</html>
